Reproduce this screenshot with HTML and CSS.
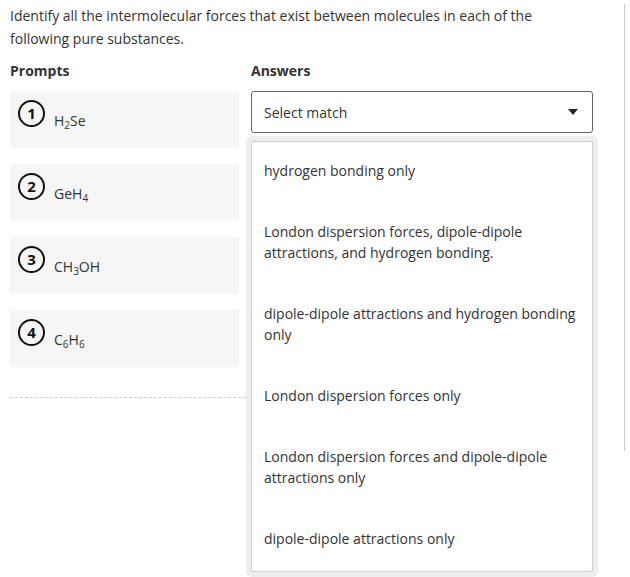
FILE: index.html
```html
<!doctype html>
<html>
	<head>
		<meta charset="utf-8">
		<link rel="stylesheet" href="styles.css">
	</head>
	<body>
		<div class="frame">
			<p class="question">Identify all the intermolecular forces that exist between molecules in each of the following pure substances.</p>

			<div class="match">
				<div class="col prompts">
					<h4>Prompts</h4>
					<div class="prompt">
						<span class="num">1</span>
						<span class="formula">H<sub>2</sub>Se</span>
					</div>
					<div class="prompt">
						<span class="num">2</span>
						<span class="formula">GeH<sub>4</sub></span>
					</div>
					<div class="prompt">
						<span class="num">3</span>
						<span class="formula">CH<sub>3</sub>OH</span>
					</div>
					<div class="prompt">
						<span class="num">4</span>
						<span class="formula">C<sub>6</sub>H<sub>6</sub></span>
					</div>
				</div>

				<div class="col answers">
					<h4>Answers</h4>
					<div class="select-wrap">
						<div class="select">
							<span>Select match</span>
							<span class="caret"></span>
						</div>
						<ul class="listbox">
							<li>hydrogen bonding only</li>
							<li>London dispersion forces, dipole-dipole attractions, and hydrogen bonding.</li>
							<li>dipole-dipole attractions and hydrogen bonding only</li>
							<li>London dispersion forces only</li>
							<li>London dispersion forces and dipole-dipole attractions only</li>
							<li>dipole-dipole attractions only</li>
						</ul>
					</div>
				</div>
			</div>
		</div>
	</body>
</html>
```

FILE: styles.css
```css
html, body {
	height: 100%;
}

body {
	margin: 0;
	min-height: 577px;
	font-family: "Open Sans", "Liberation Sans", sans-serif;
	font-size: 14px;
	color: #333;
	background: #fff;
}

.frame {
	width: 614px;
	height: 447px;
	padding-left: 10px;
	border-right: 1px solid #ccc;
}

.question {
	width: 560px;
	margin: 4px 0 0;
	line-height: 23px;
}

.match {
	display: grid;
	grid-template-columns: 229px 342px;
	column-gap: 12px;
	width: 604px;
}

.col {
	display: flex;
	flex-direction: column;
}

.prompts {
	gap: 16px;
	margin-right: -12px;
	padding-right: 12px;
	padding-bottom: 30px;
	border-bottom: 1px dashed #ccc;
}

h4 {
	margin: 10px 0 0;
	font-size: 14px;
	font-weight: 700;
	line-height: 21px;
}

.prompts h4 {
	margin-bottom: -6px;
}

.answers h4 {
	margin-bottom: 10px;
}

.prompt {
	display: flex;
	align-items: flex-start;
	gap: 9px;
	height: 57px;
	box-sizing: border-box;
	padding: 9px 8px;
	background: #f6f6f6;
	border-radius: 2px;
}

.num {
	display: flex;
	align-items: center;
	justify-content: center;
	width: 23px;
	height: 23px;
	border: 2px solid #111;
	border-radius: 50%;
	font-weight: 700;
	font-size: 15px;
	color: #111;
	line-height: 1;
}

.formula {
	padding-top: 10px;
	line-height: 21px;
}

.formula sub {
	font-size: 10px;
	line-height: 0;
	vertical-align: -3px;
}

.select-wrap {
	position: relative;
}

.select {
	display: flex;
	align-items: center;
	justify-content: space-between;
	height: 42px;
	box-sizing: border-box;
	padding: 0 14px 0 12px;
	border: 1px solid #666;
	border-radius: 3px;
	background: #fff;
}

.caret {
	width: 0;
	height: 0;
	border-left: 5px solid transparent;
	border-right: 5px solid transparent;
	border-top: 6px solid #222;
}

.listbox {
	position: absolute;
	top: 50px;
	left: 0;
	right: 0;
	z-index: 2;
	margin: 0;
	padding: 0;
	list-style: none;
	background: #fff;
	border: 1px solid #ccc;
	border-radius: 2px;
	box-shadow: 0 0 0 5px #eee;
}

.listbox li {
	padding: 18px 12px 22px;
	line-height: 21px;
}
```
